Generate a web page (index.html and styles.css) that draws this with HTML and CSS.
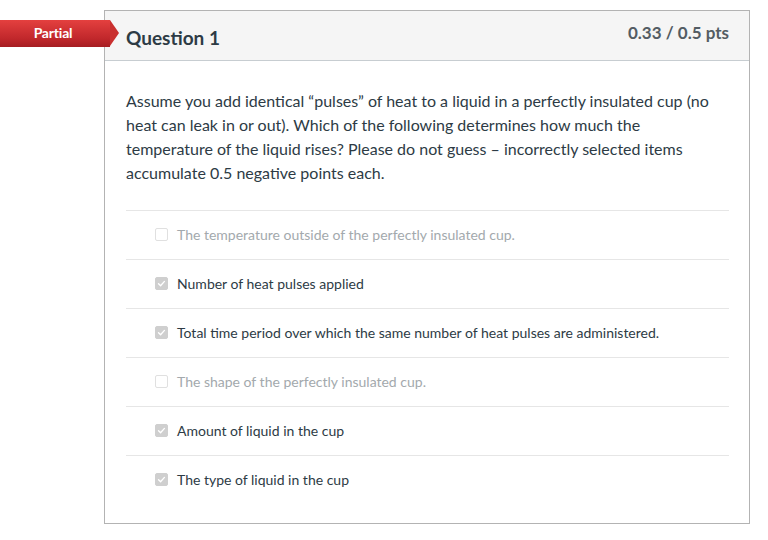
FILE: index.html
```html
<!DOCTYPE html>
<html>
<head>
<meta charset="utf-8">
<link rel="stylesheet" href="styles.css">
</head>
<body>
<div class="page">
  <div class="badge">Partial</div>
  <div class="card">
    <div class="card-header">
      <span class="title">Question 1</span>
      <span class="pts">0.33 / 0.5 pts</span>
    </div>
    <div class="card-body">
      <p class="qtext">Assume you add identical “pulses” of heat to a liquid in a perfectly insulated cup (no heat can leak in or out). Which of the following determines how much the temperature of the liquid rises? Please do not guess – incorrectly selected items accumulate 0.5 negative points each.</p>
      <div class="answers">
        <div class="answer dim"><span class="box"></span><span>The temperature outside of the perfectly insulated cup.</span></div>
        <div class="answer"><span class="box checked"><svg viewBox="0 0 13 13" width="13" height="13"><path d="M3 6.8 L5.4 9.2 L10 4" fill="none" stroke="#fff" stroke-width="1.6" stroke-linecap="round" stroke-linejoin="round"/></svg></span><span>Number of heat pulses applied</span></div>
        <div class="answer"><span class="box checked"><svg viewBox="0 0 13 13" width="13" height="13"><path d="M3 6.8 L5.4 9.2 L10 4" fill="none" stroke="#fff" stroke-width="1.6" stroke-linecap="round" stroke-linejoin="round"/></svg></span><span>Total time period over which the same number of heat pulses are administered.</span></div>
        <div class="answer dim"><span class="box"></span><span>The shape of the perfectly insulated cup.</span></div>
        <div class="answer"><span class="box checked"><svg viewBox="0 0 13 13" width="13" height="13"><path d="M3 6.8 L5.4 9.2 L10 4" fill="none" stroke="#fff" stroke-width="1.6" stroke-linecap="round" stroke-linejoin="round"/></svg></span><span>Amount of liquid in the cup</span></div>
        <div class="answer"><span class="box checked"><svg viewBox="0 0 13 13" width="13" height="13"><path d="M3 6.8 L5.4 9.2 L10 4" fill="none" stroke="#fff" stroke-width="1.6" stroke-linecap="round" stroke-linejoin="round"/></svg></span><span>The type of liquid in the cup</span></div>
      </div>
    </div>
  </div>
</div>
</body>
</html>
```
FILE: styles.css
```css
html, body {
  margin: 0;
  padding: 0;
  background: #fff;
  font-family: Lato, "Open Sans", sans-serif;
  color: #2d3b45;
}
.page {
  position: relative;
  padding: 10px 0 0 104px;
  width: 646px;
}
.badge {
  position: absolute;
  left: 0;
  top: 20px;
  width: 110px;
  height: 27px;
  background: linear-gradient(#e4403f, #c0272b 70%, #a51d22);
  color: #fff;
  font-size: 14px;
  font-weight: 700;
  line-height: 25px;
  padding-right: 4px;
  box-sizing: border-box;
  text-align: center;
  letter-spacing: -0.2px;
}
.badge::after {
  content: "";
  position: absolute;
  left: 110px;
  top: 0;
  border-top: 13.5px solid transparent;
  border-bottom: 13.5px solid transparent;
  border-left: 9px solid #c9302f;
}
.card {
  border: 1px solid #b3b3b3;
  height: 512px;
  box-sizing: content-box;
}
.card-header {
  background: #f5f5f5;
  border-bottom: 1px solid #c7cdd1;
  height: 49px;
  display: flex;
  align-items: center;
  justify-content: space-between;
  padding: 0 20px 0 21px;
}
.title {
  font-size: 19px;
  font-weight: 700;
  margin-top: 3px;
}
.pts {
  font-size: 17px;
  font-weight: 700;
  color: #535c63;
  margin-top: -6px;
}
.card-body {
  padding: 28px 20px 0 21px;
}
.qtext {
  margin: 0;
  font-size: 16px;
  line-height: 24px;
  padding-right: 8px;
}
.answers {
  margin-top: 25px;
}
.answer {
  border-top: 1px solid #e6e6e6;
  box-sizing: border-box;
  height: 49px;
  padding-bottom: 2px;
  display: flex;
  align-items: center;
  padding-left: 29px;
  font-size: 14px;
}
.answer.dim {
  color: #a3a9ad;
}
.box {
  width: 11px;
  height: 11px;
  border: 1px solid #e0e0e0;
  border-radius: 2px;
  background: #fff;
  margin-right: 9px;
  display: flex;
  align-items: center;
  justify-content: center;
  flex-shrink: 0;
}
.box.checked {
  background: #cfcfcf;
  border-color: #cfcfcf;
}
.box svg {
  display: block;
  width: 11px;
  height: 11px;
}
```
